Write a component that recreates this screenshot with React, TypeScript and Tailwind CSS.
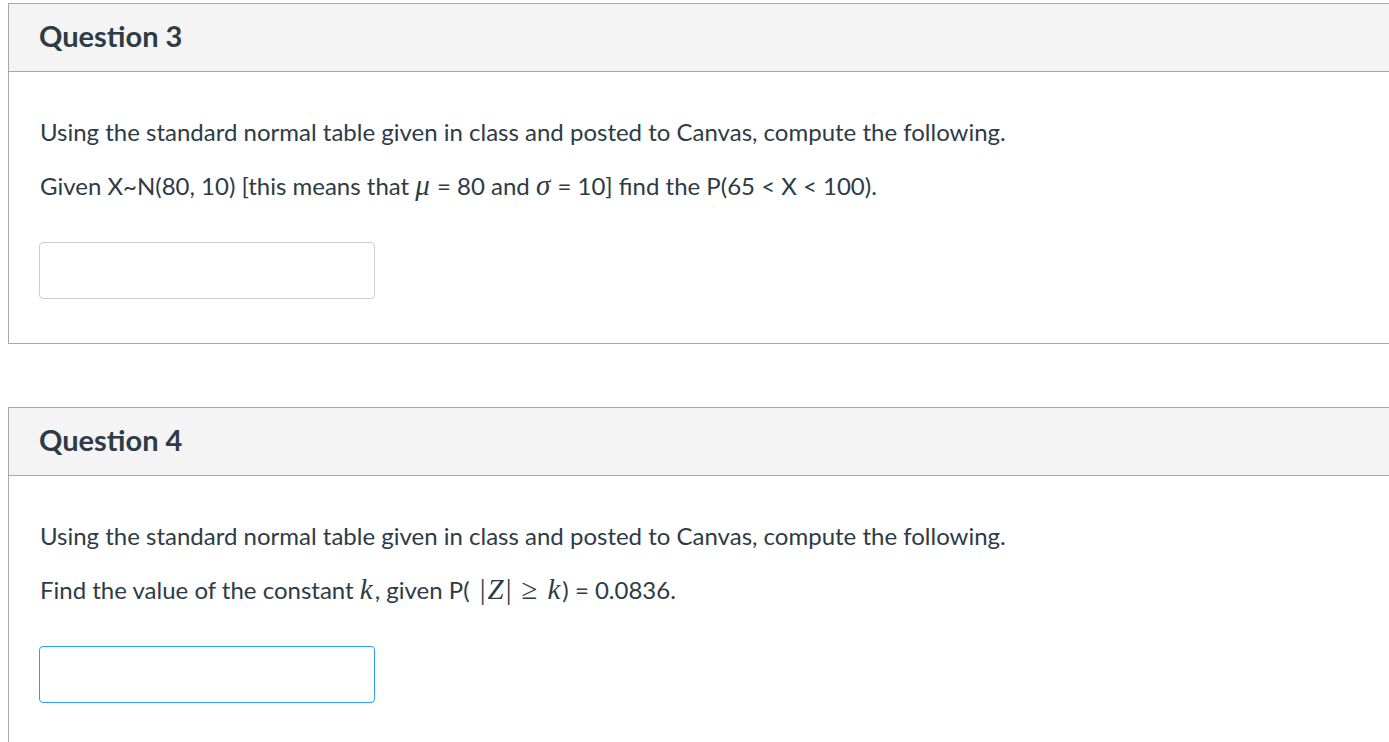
import React from 'react';

const mathFont = { fontFamily: '"Liberation Serif", "DejaVu Serif", serif' };

const M = ({
  children,
  italic = true,
  className = '',
}: {
  children: React.ReactNode;
  italic?: boolean;
  className?: string;
}) => (
  <span
    className={`text-[29px] leading-none ${italic ? 'italic' : ''} ${className}`}
    style={mathFont}
  >
    {children}
  </span>
);

interface QuestionProps {
  title: string;
  prompt: React.ReactNode;
  focused?: boolean;
}

const Question = ({ title, prompt, focused }: QuestionProps) => (
  <div className="w-[1400px] border border-[#a8a8a8] border-r-0 bg-white">
    <div className="h-[68px] bg-[#f4f4f4] border-b border-[#a8a8a8] pl-[30px] flex items-center">
      <h2 className="text-[29px] font-bold text-[#2d3b45] pb-[3px]">{title}</h2>
    </div>
    <div className="pl-[30px] pt-[45px] pb-[44px] text-[24px] leading-[30px] text-[#2d3b45]">
      <p className="pl-[1px]">Using the standard normal table given in class and posted to Canvas, compute the following.</p>
      <p className="mt-[24px] pl-[1px]">{prompt}</p>
      <div
        className={`mt-[41px] w-[336px] h-[57px] rounded-[4px] border ${
          focused ? 'border-[#2b9cf0]' : 'border-[#c7cdd1]'
        } bg-white`}
      />
    </div>
  </div>
);

export default function App() {
  return (
    <div
      className="w-[1389px] h-[742px] overflow-hidden bg-white pl-2 pt-[3px]"
      style={{ fontFamily: 'Lato, "Open Sans", sans-serif' }}
    >
      <div className="flex flex-col gap-[63px]">
        <Question
          title="Question 3"
          prompt={
            <>
              Given X~N(80, 10) [this means that <M className="mr-[1px]">μ</M> = 80 and <M className="mr-[1px]">σ</M> = 10] find the P(65 &lt; X &lt; 100).
            </>
          }
        />
        <Question
          title="Question 4"
          focused
          prompt={
            <>
              Find the value of the constant <M className="mr-[2px]">k</M>, given P( <M italic={false} className="ml-[4px]">|</M>
              <M className="px-[2px]">Z</M>
              <M italic={false}>|</M>
              <M italic={false} className="mx-[10px]">≥</M>
              <M className="mr-[2px]">k</M>) = 0.0836.
            </>
          }
        />
      </div>
    </div>
  );
}
